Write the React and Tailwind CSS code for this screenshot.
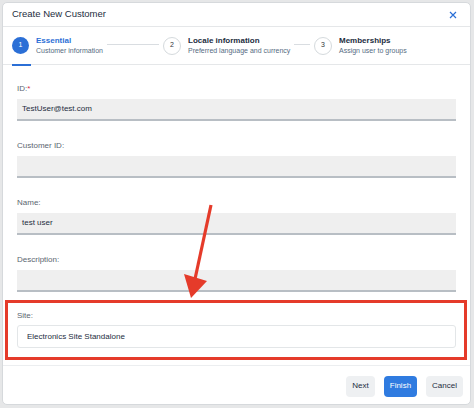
import React from 'react';

const STEPS = [
  { n: 1, title: 'Essential', sub: 'Customer information', active: true },
  { n: 2, title: 'Locale information', sub: 'Preferred language and currency' },
  { n: 3, title: 'Memberships', sub: 'Assign user to groups' },
];

const FIELDS = [
  { label: 'ID:', required: true, value: 'TestUser@test.com' },
  { label: 'Customer ID:', value: '' },
  { label: 'Name:', value: 'test user' },
  { label: 'Description:', value: '' },
];

function Step({ step, last }) {
  return (
    <div className="relative flex w-[151px] shrink-0 items-center">
      <div
        className={
          step.active
            ? 'flex h-[17px] w-[17px] shrink-0 items-center justify-center rounded-full bg-[#2b6fd6] text-[7px] text-white'
            : 'flex h-[18px] w-[18px] shrink-0 items-center justify-center rounded-full border border-[#d5dadd] bg-white text-[7px] text-[#32363a]'
        }
      >
        {step.n}
      </div>
      <div className="ml-[7px] flex flex-col leading-[10px]">
        <span className={step.active ? 'text-[8px] font-bold text-[#2b6fd6]' : 'text-[8px] font-bold text-[#1d2d3e]'}>
          {step.title}
        </span>
        <span className="whitespace-nowrap text-[7px] text-[#556b82]">{step.sub}</span>
      </div>
      {!last && <div className="mx-[4px] mb-[3px] h-px flex-1 bg-[#d9dde1]" />}
      {step.active && <div className="absolute bottom-[-10px] left-0 h-[2px] w-[19px] bg-[#2b6fd6]" />}
    </div>
  );
}

function Field({ label, required, value, plain }) {
  return (
    <div className="flex flex-col">
      <div className="h-[10px] text-[8px] leading-[10px] text-[#5b6670]">
        {label}
        {required && <span className="text-[#d62d4b]">*</span>}
      </div>
      <div
        className={
          plain
            ? 'mt-[4px] flex h-[23px] items-center rounded-[3px] border border-[#e3e6e8] bg-white px-[9px] text-[8px] text-[#1d2d3e]'
            : 'mt-[5px] flex h-[22px] items-center border-b-2 border-[#b8bec4] bg-[#efefef] px-[5px] text-[8px] text-[#1d2d3e]'
        }
      >
        {value}
      </div>
    </div>
  );
}

export default function App() {
  return (
    <div
      className="relative h-[408px] w-[474px] overflow-hidden bg-[#e6e7e8] p-[2px]"
      style={{ fontFamily: '"Liberation Sans", Arial, sans-serif' }}
    >
      <div className="flex h-[403px] w-[469px] flex-col rounded-[5px] border border-[#d6d9dc] bg-white">
        {/* header */}
        <div className="flex h-[24px] items-center justify-between border-b border-[#e5e7e9] pl-[9px] pr-[13px]">
          <span className="text-[9.5px] text-[#1d2d3e]">Create New Customer</span>
          <svg width="8" height="8" viewBox="0 0 8 8" className="text-[#2b6fd6]">
            <path d="M1 1L7 7M7 1L1 7" stroke="currentColor" strokeWidth="1.2" />
          </svg>
        </div>

        {/* wizard steps */}
        <div className="flex h-[38px] items-center border-b border-[#e5e7e9] pl-[9px]">
          {STEPS.map((s, i) => (
            <Step key={s.n} step={s} last={i === STEPS.length - 1} />
          ))}
        </div>

        {/* form */}
        <div className="flex flex-1 flex-col gap-[20px] px-[14px] pt-[19px]">
          {FIELDS.map(f => (
            <Field key={f.label} {...f} />
          ))}
          <div className="-mt-[1px]">
            <Field label="Site:" value="Electronics Site Standalone" plain />
          </div>
        </div>

        {/* footer */}
        <div className="flex h-[39px] items-center justify-end gap-[9px] border-t border-[#eceef0] pr-[7px] pt-[2px]">
          <button className="h-[21px] rounded-[4px] bg-[#eef0f2] px-[6px] text-[8px] text-[#1d2d3e]">Next</button>
          <button className="h-[21px] rounded-[4px] bg-[#2f7be0] px-[6px] text-[8px] text-white">Finish</button>
          <button className="h-[21px] rounded-[4px] bg-[#eef0f2] px-[6px] text-[8px] text-[#1d2d3e]">Cancel</button>
        </div>
      </div>

      {/* highlight box around the site field */}
      <div className="absolute left-[5px] top-[300px] h-[60px] w-[462px] border-[3px] border-[#e53b2a]" />

      {/* pointer arrow */}
      <svg className="absolute left-0 top-0" width="474" height="408" viewBox="0 0 474 408">
        <line x1="211" y1="205" x2="195" y2="279" stroke="#e53b2a" strokeWidth="3.2" />
        <polygon points="184,274 207,281 191,298" fill="#e53b2a" />
      </svg>
    </div>
  );
}
